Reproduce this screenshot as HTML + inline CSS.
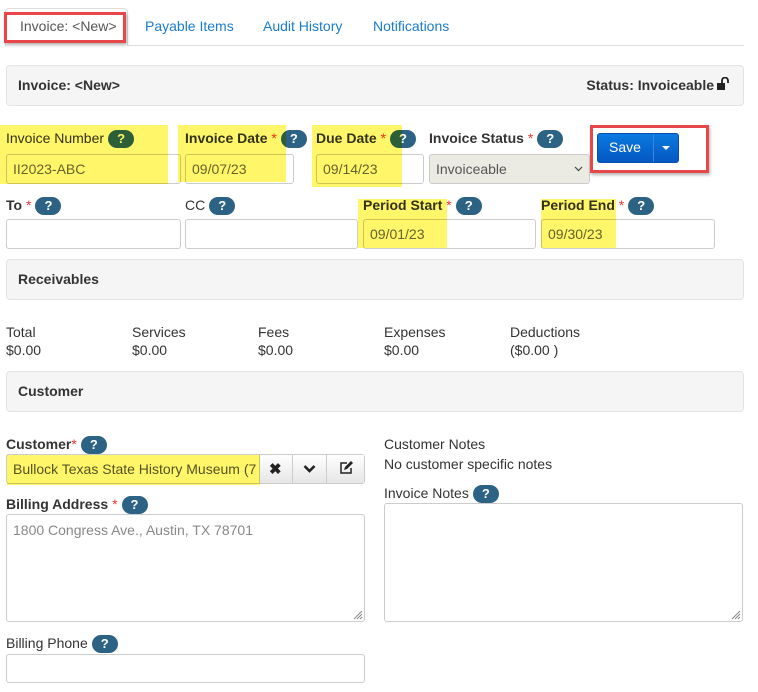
<!DOCTYPE html>
<html><head><style>
*{box-sizing:border-box;margin:0;padding:0}
body{width:758px;height:692px;background:#fff;font-family:"Liberation Sans",Arial,sans-serif;font-size:14px;color:#333;position:relative;overflow:hidden}
.a{position:absolute;white-space:nowrap}
.lbl{position:absolute;font-size:14px;line-height:18px;white-space:nowrap}
.b{font-weight:bold}
.r{color:#e33;font-weight:normal}
.q{display:inline-block;width:26px;height:18px;border-radius:9px;background:#2c6283;color:#fff;font-weight:bold;font-size:13px;text-align:center;line-height:18px;vertical-align:middle;margin-left:4px}
.inp{position:absolute;border:1px solid #ccc;border-radius:3px;background:#fff;height:30px;padding-left:6px;line-height:28px;color:#666;font-size:14px}
.pan{position:absolute;left:6px;width:738px;height:41px;background:#f5f5f5;border:1px solid #e3e3e3;border-radius:4px}
.hl{position:absolute;background:#fff55a;mix-blend-mode:multiply;opacity:.9}
.tab{position:absolute;top:18px;color:#1a7ccc;font-size:14px}
</style></head><body>
<div class="a" style="left:5px;top:8px;width:123px;height:38px;border:1px solid #ddd;border-bottom:none;border-radius:4px 4px 0 0;background:#fff"></div>
<div class="a" style="left:128px;top:45px;width:616px;height:1px;background:#ddd"></div>
<div class="a" style="left:4px;top:12px;width:122px;height:31px;border:3px solid #e8474a;box-shadow:1px 2px 3px rgba(0,0,0,.3)"></div>
<div class="tab" style="left:20px;color:#555">Invoice: &lt;New&gt;</div>
<div class="tab" style="left:145px">Payable Items</div>
<div class="tab" style="left:263px">Audit History</div>
<div class="tab" style="left:373px">Notifications</div>
<div class="pan" style="top:65px"></div>
<div class="lbl b" style="left:18px;top:76px">Invoice: &lt;New&gt;</div>
<div class="lbl b" style="right:44px;top:76px">Status: Invoiceable</div>
<svg class="a" style="left:717px;top:77px" width="13" height="14" viewBox="0 0 13 14"><rect x="0" y="6" width="8" height="7" fill="#222"/><path d="M5 6V3.5a3 3 0 0 1 6 0V6" stroke="#222" stroke-width="1.8" fill="none"/></svg>
<div class="lbl" style="left:6px;top:129px">Invoice Number<span class="q">?</span></div>
<div class="lbl b" style="left:185px;top:129px">Invoice Date <span class="r">*</span><span class="q">?</span></div>
<div class="lbl b" style="left:316px;top:129px">Due Date <span class="r">*</span><span class="q">?</span></div>
<div class="lbl b" style="left:429px;top:129px">Invoice Status <span class="r">*</span><span class="q">?</span></div>
<div class="inp" style="left:6px;top:154px;width:175px">II2023-ABC</div>
<div class="inp" style="left:185px;top:154px;width:109px">09/07/23</div>
<div class="inp" style="left:316px;top:154px;width:108px">09/14/23</div>
<div class="inp" style="left:429px;top:154px;width:161px;background:#ebebe4;color:#555">Invoiceable<svg style="position:absolute;right:6px;top:11px" width="9" height="6" viewBox="0 0 9 6"><path d="M1 1l3.5 3.5L8 1" stroke="#444" stroke-width="1.2" fill="none"/></svg></div>
<div class="a" style="left:597px;top:133px;width:82px;height:30px;border-radius:3px;background:linear-gradient(#0a7ae0,#0557c2);border:1px solid #0550b0"></div>
<div class="a" style="left:609px;top:139px;color:#fff;font-size:14px">Save</div>
<div class="a" style="left:653px;top:134px;width:1px;height:28px;background:#3b86d6"></div>
<div class="a" style="left:662px;top:146px;width:0;height:0;border-left:4px solid transparent;border-right:4px solid transparent;border-top:4px solid #fff"></div>
<div class="a" style="left:590px;top:125px;width:119px;height:48px;border:3px solid #e8474a;box-shadow:1px 2px 3px rgba(0,0,0,.3)"></div>
<div class="lbl b" style="left:6px;top:196px">To <span class="r">*</span><span class="q">?</span></div>
<div class="lbl" style="left:185px;top:196px">CC<span class="q">?</span></div>
<div class="lbl b" style="left:363px;top:196px">Period Start <span class="r">*</span><span class="q">?</span></div>
<div class="lbl b" style="left:541px;top:196px">Period End <span class="r">*</span><span class="q">?</span></div>
<div class="inp" style="left:6px;top:219px;width:175px"></div>
<div class="inp" style="left:185px;top:219px;width:173px"></div>
<div class="inp" style="left:363px;top:219px;width:173px">09/01/23</div>
<div class="inp" style="left:541px;top:219px;width:174px">09/30/23</div>
<div class="pan" style="top:259px"></div>
<div class="lbl b" style="left:18px;top:270px">Receivables</div>
<div class="lbl" style="left:6px;top:323px">Total<br>$0.00</div>
<div class="lbl" style="left:132px;top:323px">Services<br>$0.00</div>
<div class="lbl" style="left:258px;top:323px">Fees<br>$0.00</div>
<div class="lbl" style="left:384px;top:323px">Expenses<br>$0.00</div>
<div class="lbl" style="left:510px;top:323px">Deductions<br>($0.00 )</div>
<div class="pan" style="top:371px"></div>
<div class="lbl b" style="left:18px;top:382px">Customer</div>
<div class="lbl b" style="left:6px;top:435px">Customer<span class="r">*</span><span class="q">?</span></div>
<div class="inp" style="left:6px;top:454px;width:359px;color:#555;overflow:hidden">Bullock Texas State History Museum (7</div>
<div class="a" style="left:259px;top:455px;width:105px;height:28px;background:linear-gradient(#fff,#e6e6e6);border-left:1px solid #ccc"></div>
<div class="a" style="left:292px;top:455px;width:1px;height:28px;background:#ccc"></div>
<div class="a" style="left:326px;top:455px;width:1px;height:28px;background:#ccc"></div>
<div class="a" style="left:269px;top:460px;font-weight:bold;font-size:15px;color:#222">&#10006;</div>
<svg class="a" style="left:303px;top:464px" width="13" height="10" viewBox="0 0 13 10"><path d="M1.5 2l5 5 5-5" stroke="#222" stroke-width="2.6" fill="none"/></svg>
<svg class="a" style="left:339px;top:461px" width="14" height="14" viewBox="0 0 14 14"><path d="M8 2H2v10h10V7" stroke="#222" stroke-width="1.5" fill="none"/><path d="M5 9l1-3 6-6 2 2-6 6z" fill="#222"/></svg>
<div class="lbl" style="left:384px;top:435px">Customer Notes</div>
<div class="lbl" style="left:384px;top:455px">No customer specific notes</div>
<div class="lbl b" style="left:6px;top:495px">Billing Address <span class="r">*</span><span class="q">?</span></div>
<div class="inp" style="left:6px;top:514px;width:359px;height:108px;line-height:18px;padding-top:6px;color:#888">1800 Congress Ave., Austin, TX 78701</div>
<svg class="a" style="left:352px;top:609px" width="11" height="11" viewBox="0 0 11 11"><path d="M10 2L2 10M10 5L5 10M10 8L8 10" stroke="#888" stroke-width="1"/></svg>
<div class="lbl" style="left:384px;top:484px">Invoice Notes<span class="q">?</span></div>
<div class="inp" style="left:384px;top:503px;width:359px;height:119px"></div>
<svg class="a" style="left:730px;top:609px" width="11" height="11" viewBox="0 0 11 11"><path d="M10 2L2 10M10 5L5 10M10 8L8 10" stroke="#888" stroke-width="1"/></svg>
<div class="lbl" style="left:6px;top:634px">Billing Phone<span class="q">?</span></div>
<div class="inp" style="left:6px;top:654px;width:359px;height:29px"></div>
<div class="hl" style="left:0;top:125px;width:168px;height:59px"></div>
<div class="hl" style="left:178px;top:125px;width:108px;height:57px"></div>
<div class="hl" style="left:312px;top:125px;width:90px;height:62px"></div>
<div class="hl" style="left:358px;top:199px;width:89px;height:49px"></div>
<div class="hl" style="left:541px;top:199px;width:75px;height:49px"></div>
<div class="hl" style="left:7px;top:455px;width:253px;height:30px"></div>
</body></html>
